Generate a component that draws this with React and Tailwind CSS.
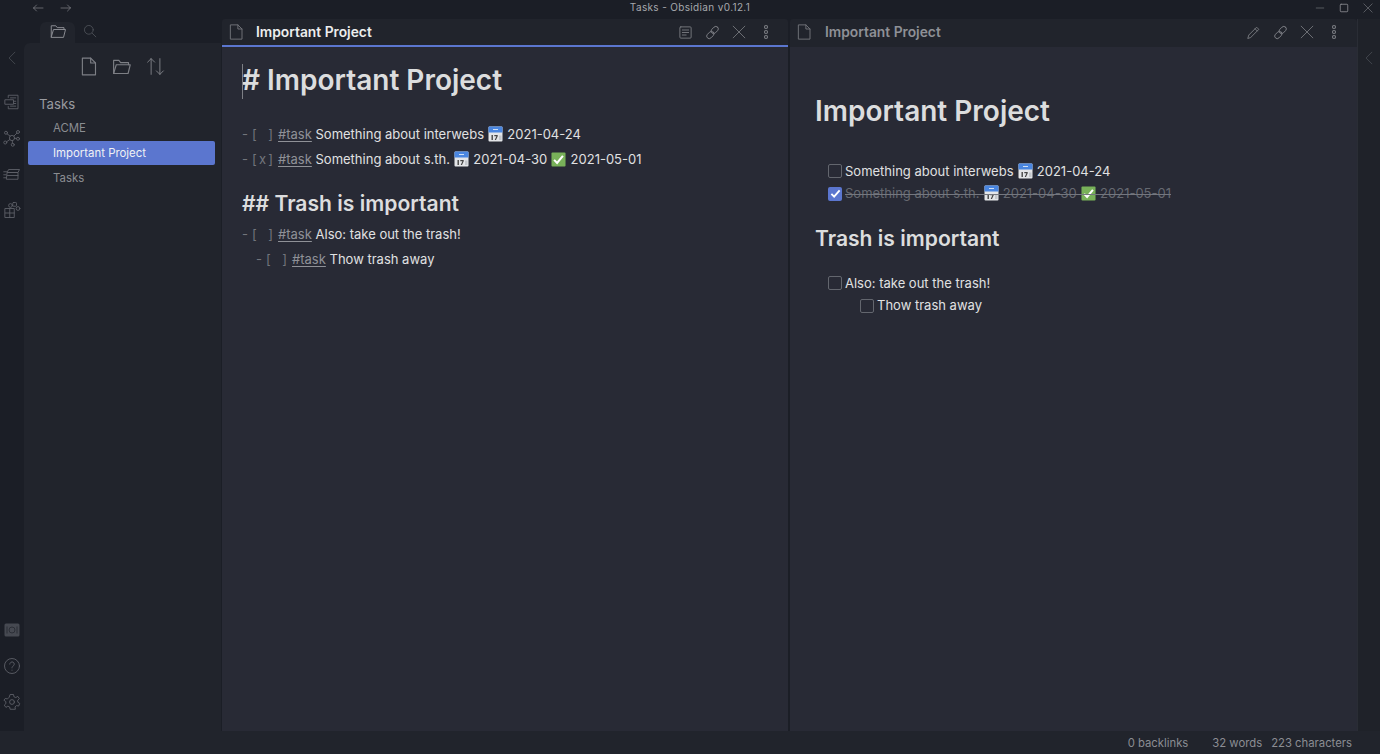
import React from "react";

const Ic = ({ children, className = "", size = 18, vb = 24, sw = 1.3 }) => (
  <svg width={size} height={size} viewBox={`0 0 ${vb} ${vb}`} fill="none" stroke="currentColor" strokeWidth={sw} strokeLinecap="round" strokeLinejoin="round" className={className}>
    {children}
  </svg>
);

const FileIc = ({ size = 18, className = "" }) => (
  <Ic size={size} className={className}>
    <path d="M5 2.5h9.5L20 8v13.5H5z" />
    <path d="M14.5 2.5V8H20" />
  </Ic>
);
const FolderIc = ({ size = 18, className = "" }) => (
  <Ic size={size} className={className}>
    <path d="M3 20V5h6l2 2.5h9V10" />
    <path d="M3 20l3-10h16l-2.5 10z" />
  </Ic>
);
const LinkIc = ({ className = "" }) => (
  <Ic size={15} className={className} sw={1.5}>
    <rect x="11.5" y="1.5" width="8" height="13" rx="4" transform="rotate(45 15.5 8)" />
    <rect x="4.5" y="9.5" width="8" height="13" rx="4" transform="rotate(45 8.5 16)" />
  </Ic>
);
const XIc = ({ className = "" }) => (
  <Ic size={14} className={className} sw={1.4}><path d="M2 2l20 20M22 2L2 22" /></Ic>
);
const MoreIc = ({ className = "" }) => (
  <Ic size={16} className={className} sw={1.6}>
    <circle cx="12" cy="4.5" r="2.3" /><circle cx="12" cy="12" r="2.3" /><circle cx="12" cy="19.5" r="2.3" />
  </Ic>
);
const ChevL = ({ className = "" }) => (
  <Ic size={14} className={className} sw={1.4}><path d="M17 2L7 12l10 10" /></Ic>
);

const Cal = () => (
  <svg width="15" height="16" viewBox="0 0 15 16" className="inline-block align-[-3px] mx-[0.5px]">
    <rect x="0.5" y="0.5" width="14" height="15" rx="1" fill="#e3e5e8" />
    <path d="M0.5 1.5a1 1 0 0 1 1-1h12a1 1 0 0 1 1 1v5h-14z" fill="#4a86e0" />
    <rect x="5" y="3" width="5" height="1" fill="#cfe0f7" />
    <rect x="3.5" y="9" width="1.4" height="5" fill="#444" />
    <path d="M6.3 9h3.4v1.2L8 14H6.7l1.7-3.8H6.3z" fill="#444" />
    <rect x="11" y="9.5" width="2.5" height="4.5" fill="#c4c7cc" />
  </svg>
);
const Chk = () => (
  <svg width="15" height="15" viewBox="0 0 16 16" className="inline-block align-[-3px] mx-[0.5px]">
    <rect x="0.5" y="0.5" width="15" height="15" rx="1" fill="#78b159" />
    <path d="M3.3 8.4l3.2 3.2 6.2-7.4" fill="none" stroke="#fff" strokeWidth="2.2" />
  </svg>
);

const Tag = () => <span className="text-[#8f9197] underline underline-offset-2">#task</span>;

const SrcLine = ({ mark = "", indent, children }) => (
  <div className={`h-[25px] leading-[25px] whitespace-pre text-[13px] text-[#e0e1e2] flex items-baseline ${indent ? "pl-[14px]" : ""}`}>
    <span className="w-[10px] text-[#72757c]">-</span>
    <span className="w-[21px] mr-[5px] flex justify-between text-[#72757c]">
      <span>[</span><span>{mark}</span><span>]</span>
    </span>
    <span><Tag /> {children}</span>
  </div>
);

const Box = ({ on }) =>
  on ? (
    <span className="w-[14px] h-[14px] rounded-[2px] bg-[#5b76cf] shrink-0 flex items-center justify-center">
      <svg width="11" height="11" viewBox="0 0 12 12"><path d="M1.5 6.5l3 3 6-7" fill="none" stroke="#fff" strokeWidth="2" /></svg>
    </span>
  ) : (
    <span className="w-[14px] h-[14px] rounded-[2px] border border-[#63666e] shrink-0" />
  );

const Item = ({ on, className = "", children }) => (
  <div className={`flex items-center gap-[3px] h-[22.5px] text-[13px] ${className}`}>
    <Box on={on} />
    <span className={on ? "relative text-[#666971] whitespace-pre" : "text-[#e0e1e2] whitespace-pre"}>
      {children}
      {on && <span className="absolute left-0 right-0 top-1/2 h-px bg-[#74777f]" />}
    </span>
  </div>
);

const TabHeader = ({ title, titleClass, barClass, children }) => (
  <div className={`h-[26px] shrink-0 flex items-center pl-[5px] bg-[#21242c] rounded-t-[3px] ${barClass}`}>
    <FileIc size={18} className="text-[#6f7177]" />
    <span className={`text-[13.8px] font-semibold ${titleClass}`}>{title}</span>
    <div className="ml-auto flex items-center gap-[12px] text-[#7d7f85]">{children}</div>
  </div>
);

const Ribbon = ({ children }) => <div className="w-[24px] shrink-0 bg-[#1b1e26] text-[#5d6068] flex flex-col items-center">{children}</div>;

export default function App() {
  return (
    <div className="w-[1380px] h-[754px] overflow-hidden flex flex-col bg-[#1b1e26] font-['Inter','Noto_Sans',sans-serif]">
      {/* title bar */}
      <div className="h-[19px] pb-[4px] shrink-0 flex items-center relative text-[#8b8d93]">
        <div className="flex items-center gap-[16px] pl-[32px]">
          <Ic size={12}><path d="M22 12H3M9 6l-6 6 6 6" /></Ic>
          <Ic size={12}><path d="M2 12h19M15 6l6 6-6 6" /></Ic>
        </div>
        <div className="absolute left-0 right-0 top-0 h-[15px] leading-[15px] text-center text-[10px] tracking-[0.35px] text-[#a6a8ad]">Tasks - Obsidian v0.12.1</div>
        <div className="ml-auto flex items-center gap-[14px] pr-[7px]">
          <Ic size={10}><path d="M3 12h18" /></Ic>
          <Ic size={10} sw={2}><rect x="3" y="3" width="18" height="18" rx="2" /></Ic>
          <Ic size={10}><path d="M2 2l20 20M22 2L2 22" /></Ic>
        </div>
      </div>

      <div className="flex-1 flex min-h-0">
        {/* left ribbon */}
        <Ribbon>
          <div className="mt-[32px]"><ChevL className="text-[#4a4d55]" /></div>
          <div className="mt-[28px] flex flex-col items-center gap-[18px]">
            <Ic size={18} sw={1.2}>
              <path d="M7 6V3h13v18H7v-3" /><path d="M3 9h11v6H3z" /><path d="M10 6.5h7M15 11h2M15 14h2M10 17.5h7" />
            </Ic>
            <Ic size={18} sw={1.2}>
              <circle cx="12" cy="12" r="3.5" /><circle cx="4" cy="5" r="2" /><circle cx="20" cy="4" r="2" /><circle cx="3" cy="18" r="2" /><circle cx="20" cy="13" r="2" /><circle cx="13" cy="21" r="2" />
              <path d="M5.5 6.5l4 3M18.5 5.5l-4 4M4.8 17l4.4-3M15.5 12.5h2.5M12.5 15.5v3.5" />
            </Ic>
            <Ic size={18} sw={1.2}>
              <path d="M8 6h14l-2 4H6zM6 10h14v9H5z" /><path d="M6 14h14M1 9h4M1 13h3M1 17h3" />
            </Ic>
            <Ic size={18} sw={1.2}>
              <path d="M3 10h12v12H3zM3 16h12M9 10v12" /><rect x="13" y="2" width="5" height="5" rx="1" /><circle cx="20" cy="10" r="2.5" /><circle cx="10" cy="6" r="2.5" />
            </Ic>
          </div>
          <div className="mt-auto mb-[20px] flex flex-col items-center gap-[18px]">
            <div className="h-[16px]">
              <svg width="16" height="14" viewBox="0 0 16 14"><rect width="15" height="13" x="0.5" y="0.5" rx="1.5" fill="#464951" /><circle cx="8" cy="7" r="3" fill="none" stroke="#2b2e36" /><path d="M3 3.5v7M13 3.5v7" stroke="#2b2e36" /></svg>
            </div>
            <Ic size={18} sw={1.2}><circle cx="12" cy="12" r="10" /><path d="M9 9.5a3 3 0 1 1 4.5 2.6c-1 .6-1.5 1.2-1.5 2.4M12 17.5v.2" /></Ic>
            <Ic size={18} sw={1.2}>
              <circle cx="12" cy="12" r="3.2" />
              <path d="M10 2h4l.6 3 2.5 1.1 2.6-1.6 2.1 3-2.2 2.2.2 2.6 2.5 1.6-1.4 3.5-3-.6-1.9 1.9.5 3H9.5l-.6-3-2.4-1.2-2.6 1.7-2.2-3 2.2-2.2-.2-2.7-2.5-1.6L3 7.3l3 .6L7.9 6z" />
            </Ic>
          </div>
        </Ribbon>

        {/* left sidebar */}
        <div className="w-[197px] shrink-0 flex flex-col text-[#7d7f85]">
          <div className="h-[24px] shrink-0 flex items-end">
            <div className="ml-[16px] w-[35px] h-[21px] pb-[3px] bg-[#21242c] rounded-t-[6px] flex items-center justify-center">
              <FolderIc size={18} className="text-[#8b8d93]" />
            </div>
            <Ic size={14} className="ml-[8px] mb-[5px] text-[#55585f]"><circle cx="10" cy="10" r="7.5" /><path d="M16 16l6 6" /></Ic>
          </div>
          <div className="flex-1 bg-[#21242c] rounded-tl-[6px] flex flex-col">
            <div className="h-[47px] flex items-center justify-center gap-[12.5px] pr-[2px] shrink-0">
              <FileIc size={21} />
              <FolderIc size={21} />
              <Ic size={21} sw={1.1}><path d="M7 21V3M3 7l4-4 4 4M17 3v18M13 17l4 4 4-4" /></Ic>
            </div>
            <div className="pl-[15px] text-[13.2px] h-[24px] leading-[24px] text-[#999ba0] mt-[2px]">Tasks</div>
            <div className="text-[11.4px]">
              <div className="h-[24px] leading-[24px] pl-[29px] text-[#8b8d92]">ACME</div>
              <div className="h-[24px] leading-[24px] pl-[25px] ml-[4px] mr-[6px] mt-[1px] rounded-[2px] bg-[#5b76cf] text-[#f0f1f4]">Important Project</div>
              <div className="h-[24px] leading-[24px] pl-[29px] mt-[1px] text-[#8b8d92]">Tasks</div>
            </div>
          </div>
        </div>

        {/* left editor pane */}
        <div className="w-[566px] shrink-0 ml-[1px] flex flex-col">
          <TabHeader title="Important Project" titleClass="text-[#eceded] ml-[11px]" barClass="pr-[14px]">
            <Ic size={15} sw={1.4}><rect x="3" y="3" width="18" height="18" rx="1.5" /><path d="M7 8h10M7 12h10M7 16h6" /></Ic>
            <LinkIc />
            <XIc />
            <MoreIc />
          </TabHeader>
          <div className="h-[2px] shrink-0 bg-[#5b76cf]" />
          <div className="flex-1 bg-[#282a35] pl-[20px] pt-[13px] relative">
            <div className="absolute left-[20px] top-[17px] w-px h-[35px] bg-[#7d7f85]" />
            <div className="text-[28px] font-semibold leading-[40px] text-[#dcddde] h-[40px]">
              # Important Project
            </div>
            <div className="mt-[22px]">
              <SrcLine>Something about interwebs <Cal /> 2021-04-24</SrcLine>
              <SrcLine mark="x">Something about s.th. <Cal /> 2021-04-30 <Chk /> 2021-05-01</SrcLine>
            </div>
            <div className="mt-[16px] text-[21.1px] font-semibold leading-[32px] h-[32px] text-[#dcddde]">## Trash is important</div>
            <div className="mt-[2px]">
              <SrcLine>Also: take out the trash!</SrcLine>
              <SrcLine indent>Thow trash away</SrcLine>
            </div>
          </div>
        </div>

        {/* right preview pane */}
        <div className="w-[567px] shrink-0 ml-[2px] flex flex-col">
          <TabHeader title="Important Project" titleClass="text-[#8e9096] ml-[12px]" barClass="pr-[15px]">
            <Ic size={15} sw={1.4}><path d="M3 21l1.5-5L17 3.5l3.5 3.5L8 19.5zM14.5 6l3.5 3.5" /></Ic>
            <LinkIc />
            <XIc />
            <MoreIc />
          </TabHeader>
          <div className="h-[2px] shrink-0 bg-[#21242c]" />
          <div className="flex-1 bg-[#282a35] pl-[25px] pt-[44px]">
            <div className="text-[28px] font-semibold leading-[40px] h-[40px] text-[#dcddde]">Important Project</div>
            <div className="mt-[29px] pl-[13px]">
              <Item>Something about interwebs <Cal /> 2021-04-24</Item>
              <Item on>Something about s.th. <Cal /> 2021-04-30 <Chk /> 2021-05-01</Item>
            </div>
            <div className="mt-[18px] text-[21.1px] font-semibold leading-[32px] h-[32px] text-[#dcddde]">Trash is important</div>
            <div className="mt-[17px] pl-[13px]">
              <Item>Also: take out the trash!</Item>
              <Item className="pl-[32px]">Thow trash away</Item>
            </div>
          </div>
        </div>

        {/* right ribbon */}
        <div className="flex-1 bg-[#1f2229] border-l border-[#2a2d35] flex justify-center items-start pt-[32px]">
          <ChevL className="text-[#4a4d55]" />
        </div>
      </div>

      {/* status bar */}
      <div className="h-[23px] pt-[2px] shrink-0 bg-[#21242c] flex items-center justify-end pr-[28px] text-[11.3px] text-[#8b8d93]">
        <span>0 backlinks</span>
        <span className="ml-[24px]">32 words</span>
        <span className="ml-[9px]">223 characters</span>
      </div>
    </div>
  );
}
